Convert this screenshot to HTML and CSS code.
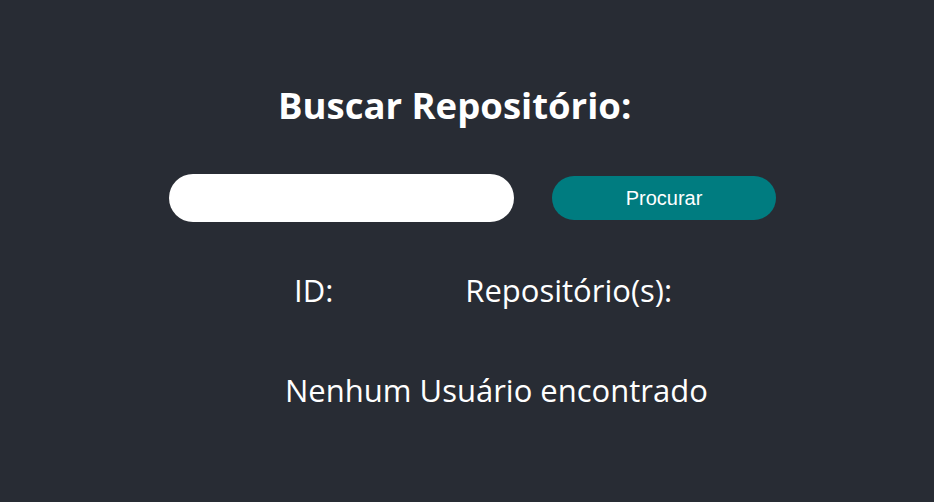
FILE: index.html
```html
<!DOCTYPE html>
<html lang="pt-BR">
<head>
<meta charset="utf-8">
<title>Buscar Repositório</title>
<link rel="stylesheet" href="styles.css">
</head>
<body>
<main class="app">
  <h1 class="title">Buscar Repositório:</h1>
  <div class="search">
    <input class="search-input" type="text">
    <button class="search-button">Procurar</button>
  </div>
  <div class="info">
    <span class="info-id">ID:</span>
    <span class="info-repos">Repositório(s):</span>
  </div>
  <p class="empty">Nenhum Usuário encontrado</p>
</main>
</body>
</html>
```
FILE: styles.css
```css
html, body {
  margin: 0;
  padding: 0;
  height: 100%;
}
body {
  background: #282c34;
  color: #ffffff;
  font-family: "Open Sans", "Noto Sans", sans-serif;
}
.app {
  display: flex;
  flex-direction: column;
  align-items: flex-start;
  padding-top: 78px;
}
.title {
  margin: 0 0 0 278px;
  font-size: 36.5px;
  font-weight: 700;
  line-height: 54px;
}
.search {
  display: flex;
  align-items: center;
  gap: 38px;
  margin: 42px 0 0 169px;
}
.search-input {
  width: 345px;
  height: 48px;
  box-sizing: border-box;
  border: none;
  border-radius: 24px;
  background: #ffffff;
  outline: none;
  padding: 0 20px;
}
.search-button {
  width: 224px;
  height: 44px;
  border: none;
  border-radius: 22px;
  background: #007c80;
  color: #ffffff;
  font-family: "Liberation Sans", Arial, sans-serif;
  font-size: 20px;
}
.info {
  display: flex;
  margin: 46px 0 0 294px;
  font-size: 31px;
  line-height: 44px;
}
.info-repos {
  margin-left: 132px;
}
.empty {
  margin: 56px 0 0 285px;
  font-size: 31px;
  line-height: 44px;
}
```
